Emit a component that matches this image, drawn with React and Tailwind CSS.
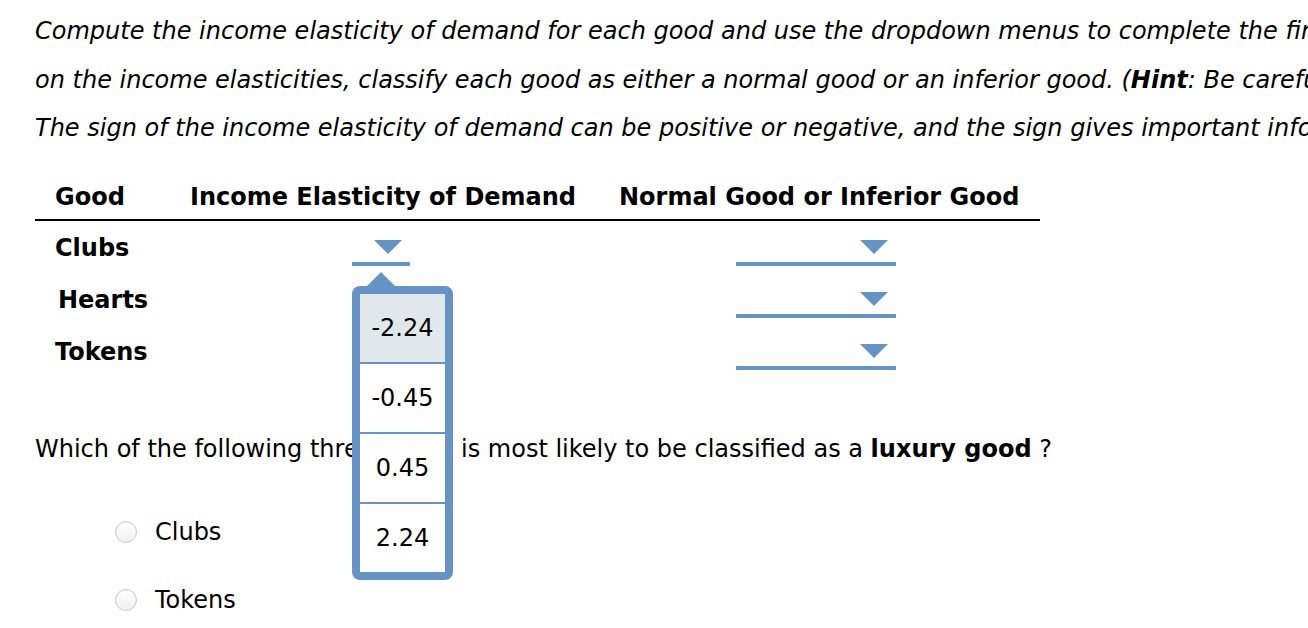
import React from "react";

const BLUE = "#6692c4";

function Tri({ up = false }) {
  return (
    <svg width="28" height="14" viewBox="0 0 28 14" className="block">
      {up ? (
        <polygon points="0,14 14,0 28,14" fill={BLUE} />
      ) : (
        <polygon points="0,0 28,0 14,14" fill={BLUE} />
      )}
    </svg>
  );
}

function Dropdown({ wide = false, open = false }) {
  return (
    <div
      className={
        "relative flex justify-end items-start pr-[8px] h-[26px] border-b-4 border-[#6692c4] " +
        (wide ? "w-[160px]" : "w-[58px]")
      }
    >
      <Tri />
      {open && (
        <div className="absolute left-0 top-[32px] z-10 flex flex-col">
          <div className="pl-[15px]">
            <Tri up />
          </div>
          <div className="w-[101px] border-[8px] border-[#6692c4] rounded-[8px] bg-white flex flex-col font-normal not-italic">
            {["-2.24", "-0.45", "0.45", "2.24"].map((v, i) => (
              <div
                key={v}
                className={
                  "flex items-center justify-center text-[24px] text-black " +
                  (i === 0
                    ? "h-[68px] bg-[#e1e8eb] "
                    : "h-[70px] border-t-2 border-[#6692c4] bg-white ")
                }
              >
                {v}
              </div>
            ))}
          </div>
        </div>
      )}
    </div>
  );
}

function Radio({ label }) {
  return (
    <div className="h-[68px] flex items-center">
      <div className="w-[22px] h-[22px] rounded-full border border-[#c9c9c9] bg-linear-to-b from-[#ffffff] to-[#f0f0f0] shadow-[inset_0_1px_1px_rgba(0,0,0,0.05)]" />
      <div className="ml-[18px]">{label}</div>
    </div>
  );
}

export default function App() {
  const rows = [
    { name: "Clubs", pad: "pl-[20px]", open: true },
    { name: "Hearts", pad: "pl-[23px]", open: false },
    { name: "Tokens", pad: "pl-[20px]", open: false },
  ];
  return (
    <div className="w-[1308px] h-[628px] overflow-hidden bg-white text-black font-['Verdana','DejaVu_Sans',sans-serif] text-[24px]">
      <div className="pl-[35px] pt-[7px] italic leading-[48.5px] whitespace-nowrap">
        <div>
          Compute the income elasticity of demand for each good and use the dropdown menus to complete the first column of the table. Based
        </div>
        <div>
          on the income elasticities, classify each good as either a normal good or an inferior good. (<b>Hint</b>: Be careful with the signs.
        </div>
        <div>
          The sign of the income elasticity of demand can be positive or negative, and the sign gives important information.
        </div>
      </div>

      <div className="ml-[35px] mt-[22.5px] w-[1005px]">
        <div className="grid grid-cols-[135px_428px_442px] h-[46px] items-center font-bold border-b-2 border-black whitespace-nowrap">
          <div className="pl-[20px]">Good</div>
          <div className="pl-[20px]">Income Elasticity of Demand</div>
          <div className="pl-[21px]">Normal Good or Inferior Good</div>
        </div>
        {rows.map((r) => (
          <div key={r.name} className="grid grid-cols-[135px_428px_442px] h-[52px]">
            <div className={"flex items-center pt-[2px] font-bold " + r.pad}>{r.name}</div>
            <div className="pt-[19px] pl-[182px]">
              <Dropdown open={r.open} />
            </div>
            <div className="pt-[19px] pl-[138px]">
              <Dropdown wide />
            </div>
          </div>
        ))}
      </div>

      <div className="pl-[35px] mt-[48px] leading-[48px] whitespace-nowrap">
        Which of the following three goods is most likely to be classified as a <b>luxury good</b> ?
      </div>

      <div className="pl-[115px] mt-[25px]">
        <Radio label="Clubs" />
        <Radio label="Tokens" />
      </div>
    </div>
  );
}
